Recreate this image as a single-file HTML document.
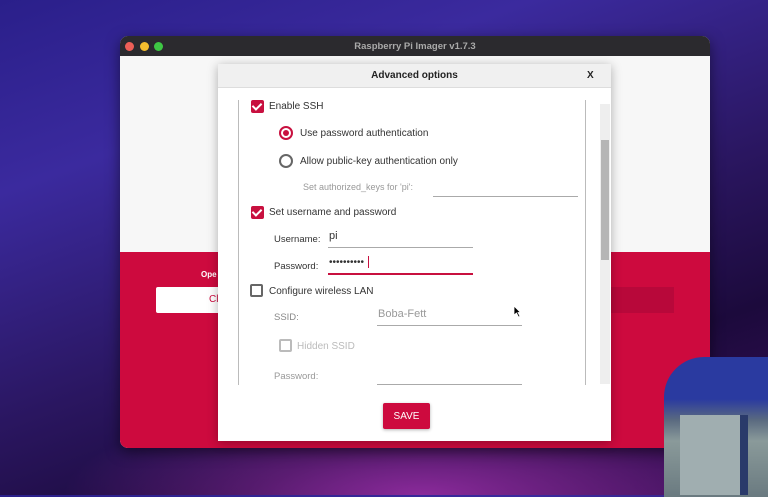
<!DOCTYPE html>
<html><head><style>
*{margin:0;padding:0;box-sizing:border-box}
body{width:768px;height:495px;overflow:hidden;position:relative;font-family:"Liberation Sans",sans-serif;
background:linear-gradient(160deg,#2a1f8a 0%,#3b2a9e 25%,#2a1660 55%,#1c0a3c 75%,#3a0f5a 100%)}
.abs{position:absolute}
.lbl{position:absolute;font-size:10px;color:#333}
.cb{position:absolute;width:13px;height:13px;border-radius:2px}
.on{background:#c8103f}
.on:after{content:"";position:absolute;left:3px;top:1px;width:4px;height:7px;border:solid #fff;border-width:0 2px 2px 0;transform:rotate(45deg)}
.off{border:2px solid #666;background:#fff}
.line{position:absolute;height:1px;background:#aaa}
</style></head><body>
<div class="abs" style="left:0;top:380px;width:768px;height:115px;background:radial-gradient(ellipse at 55% 100%,#8a2a9a 0%,rgba(60,20,90,0) 60%)"></div>
<div class="abs" style="left:120px;top:36px;width:590px;height:412px;border-radius:8px;overflow:hidden;background:#fff;box-shadow:0 4px 14px rgba(0,0,0,.5)">
 <div class="abs" style="left:0;top:0;width:590px;height:20px;background:#2b2a2e"></div>
 <div class="abs" style="left:5px;top:6px;width:9px;height:9px;border-radius:50%;background:#ed5f57"></div>
 <div class="abs" style="left:20px;top:6px;width:9px;height:9px;border-radius:50%;background:#f5be2e"></div>
 <div class="abs" style="left:34px;top:6px;width:9px;height:9px;border-radius:50%;background:#3ec744"></div>
 <div class="abs" style="left:0;top:5px;width:590px;text-align:center;font-size:9.5px;font-weight:bold;color:#aaa">Raspberry Pi Imager v1.7.3</div>
 <div class="abs" style="left:0;top:20px;width:590px;height:196px;background:#f7f7f7"></div>
 <div class="abs" style="left:0;top:216px;width:590px;height:196px;background:#cd0a3e"></div>
 <div class="abs" style="left:81px;top:234px;font-size:8px;font-weight:bold;color:#fff">Ope</div>
 <div class="abs" style="left:36px;top:251px;width:100px;height:26px;background:#fff;border-radius:2px"></div>
 <div class="abs" style="left:89px;top:258px;font-size:10px;color:#cd0a3e">Cl</div>
 <div class="abs" style="left:490px;top:251px;width:64px;height:26px;background:#b8083a"></div>
</div>
<div class="abs" style="left:218px;top:64px;width:393px;height:377px;background:#fff;box-shadow:0 2px 10px rgba(0,0,0,.3)">
 <div class="abs" style="left:0;top:0;width:393px;height:24px;background:#f0f0f0;border-bottom:1px solid #ddd"></div>
 <div class="abs" style="left:0;top:6px;width:393px;text-align:center;font-size:10px;font-weight:bold;color:#222">Advanced options</div>
 <div class="abs" style="left:369px;top:6px;font-size:10px;font-weight:bold;color:#222">X</div>
 <div class="abs" style="left:20px;top:36px;width:1px;height:285px;background:#bbb"></div>
 <div class="abs" style="left:367px;top:36px;width:1px;height:285px;background:#bbb"></div>
 <div class="abs" style="left:382px;top:40px;width:10px;height:280px;background:#eee"></div>
 <div class="abs" style="left:383px;top:76px;width:8px;height:120px;background:#b5b5b5"></div>
 <div class="abs" style="left:165px;top:339px;width:47px;height:26px;background:#cd0a3e;border-radius:2px;box-shadow:0 1px 3px rgba(0,0,0,.3);color:#fff;font-size:10px;text-align:center;line-height:27px">SAVE</div>
</div>
<div class="cb on" style="left:251px;top:100px"></div><div class="lbl" style="left:269px;top:101px">Enable SSH</div>
<div class="abs" style="left:279px;top:126px;width:14px;height:14px;border-radius:50%;border:2px solid #c8103f"></div>
<div class="abs" style="left:283px;top:130px;width:6px;height:6px;border-radius:50%;background:#c8103f"></div>
<div class="lbl" style="left:300px;top:128px">Use password authentication</div>
<div class="abs" style="left:279px;top:154px;width:14px;height:14px;border-radius:50%;border:2px solid #666"></div>
<div class="lbl" style="left:300px;top:156px">Allow public-key authentication only</div>
<div class="lbl" style="left:303px;top:182px;font-size:9px;color:#999">Set authorized_keys for 'pi':</div>
<div class="line" style="left:433px;top:196px;width:145px"></div>
<div class="cb on" style="left:251px;top:206px"></div><div class="lbl" style="left:269px;top:207px">Set username and password</div>
<div class="lbl" style="left:274px;top:234px;font-size:9.5px">Username:</div>
<div class="lbl" style="left:329px;top:230px;font-size:11px">pi</div>
<div class="line" style="left:328px;top:247px;width:145px"></div>
<div class="lbl" style="left:274px;top:261px;font-size:9.5px">Password:</div>
<div class="lbl" style="left:329px;top:257px;font-size:10px;letter-spacing:0">••••••••••</div>
<div class="abs" style="left:368px;top:256px;width:1px;height:12px;background:#c8103f"></div>
<div class="abs" style="left:328px;top:273px;width:145px;height:2px;background:#c8103f"></div>
<div class="cb off" style="left:250px;top:284px"></div><div class="lbl" style="left:269px;top:286px">Configure wireless LAN</div>
<div class="lbl" style="left:274px;top:312px;font-size:9.5px;color:#888">SSID:</div>
<div class="lbl" style="left:378px;top:308px;font-size:11px;color:#999">Boba-Fett</div>
<div class="line" style="left:377px;top:325px;width:145px"></div>
<div class="cb off" style="left:279px;top:339px;border-color:#bbb"></div><div class="lbl" style="left:297px;top:341px;color:#bbb">Hidden SSID</div>
<div class="lbl" style="left:274px;top:371px;font-size:9.5px;color:#999">Password:</div>
<div class="line" style="left:377px;top:384px;width:145px"></div>
<svg class="abs" style="left:513px;top:305px" width="8" height="13"><path d="M1 1L1 10L3.5 8L5.5 12L7 11.3L5 7.5L7.5 7.5Z" fill="#000" stroke="#fff" stroke-width=".8"/></svg>
<div class="abs" style="left:664px;top:357px;width:110px;height:140px;border-radius:40px 0 0 0;background:linear-gradient(180deg,#2a3aa0 0%,#2a3aa0 30%,#5a6a80 45%,#8a9a9a 60%,#6a7a80 100%)"></div>
<div class="abs" style="left:680px;top:415px;width:60px;height:80px;background:#a0aeb0"></div>
<div class="abs" style="left:740px;top:415px;width:8px;height:80px;background:#2a3a6a"></div>
</body></html>
